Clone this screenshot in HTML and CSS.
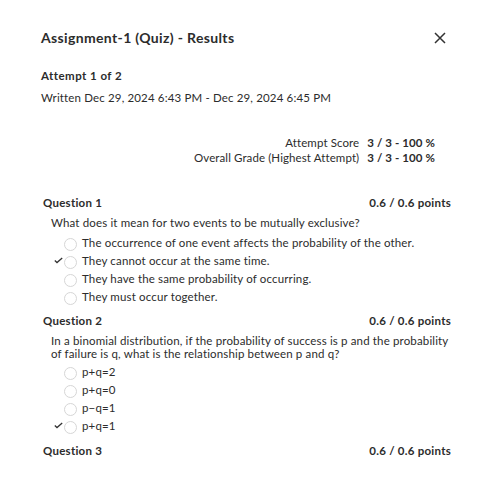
FILE: index.html
```html
<!DOCTYPE html>
<html>
<head>
<meta charset="utf-8">
<link rel="stylesheet" href="styles.css">
</head>
<body>
<div class="page">
  <div class="header">
    <h1 class="title">Assignment-1 (Quiz) - Results</h1>
    <svg class="close" width="12" height="12" viewBox="0 0 12 12"><path d="M1 1L11 11M11 1L1 11" stroke="#333" stroke-width="1.5" fill="none"/></svg>
  </div>
  <div class="attempt">Attempt 1 of 2</div>
  <div class="written">Written Dec 29, 2024 6:43 PM - Dec 29, 2024 6:45 PM</div>
  <div class="scores">
    <div class="score-label">Attempt Score</div><div class="score-val">3 / 3 - 100 %</div>
    <div class="score-label">Overall Grade (Highest Attempt)</div><div class="score-val">3 / 3 - 100 %</div>
  </div>

  <div class="question">
    <div class="q-head"><span>Question 1</span><span>0.6 / 0.6 points</span></div>
    <div class="q-text">What does it mean for two events to be mutually exclusive?</div>
    <div class="options">
      <div class="opt"><span class="mark"></span><span class="radio"></span><span>The occurrence of one event affects the probability of the other.</span></div>
      <div class="opt"><span class="mark"><svg width="9" height="7" viewBox="0 0 9 7"><path d="M0.8 3.6L3 5.6L8.2 1" stroke="#333" stroke-width="1.3" fill="none"/></svg></span><span class="radio"></span><span>They cannot occur at the same time.</span></div>
      <div class="opt"><span class="mark"></span><span class="radio"></span><span>They have the same probability of occurring.</span></div>
      <div class="opt"><span class="mark"></span><span class="radio"></span><span>They must occur together.</span></div>
    </div>
  </div>

  <div class="question">
    <div class="q-head"><span>Question 2</span><span>0.6 / 0.6 points</span></div>
    <div class="q-text">In a binomial distribution, if the probability of success is p and the probability of failure is q, what is the relationship between p and q?</div>
    <div class="options">
      <div class="opt"><span class="mark"></span><span class="radio"></span><span>p+q=2</span></div>
      <div class="opt"><span class="mark"></span><span class="radio"></span><span>p+q=0</span></div>
      <div class="opt"><span class="mark"></span><span class="radio"></span><span>p−q=1</span></div>
      <div class="opt"><span class="mark"><svg width="9" height="7" viewBox="0 0 9 7"><path d="M0.8 3.6L3 5.6L8.2 1" stroke="#333" stroke-width="1.3" fill="none"/></svg></span><span class="radio"></span><span>p+q=1</span></div>
    </div>
  </div>

  <div class="question">
    <div class="q-head"><span>Question 3</span><span>0.6 / 0.6 points</span></div>
  </div>
</div>
</body>
</html>
```
FILE: styles.css
```css
html, body {
  margin: 0;
  padding: 0;
  background: #fff;
}
body {
  font-family: Lato, "Open Sans", sans-serif;
  color: #2c2c2c;
}
.page {
  padding: 28px 43px 0 41px;
}
.header {
  display: flex;
  justify-content: space-between;
  align-items: center;
  height: 20px;
}
.title {
  margin: 0;
  font-size: 14px;
  font-weight: 700;
  letter-spacing: 0.35px;
  line-height: 20px;
}
.close {
  margin-right: 5px;
}
.attempt {
  margin-top: 20px;
  font-size: 11.5px;
  font-weight: 700;
  letter-spacing: 0.45px;
  line-height: 16px;
}
.written {
  margin-top: 6px;
  font-size: 11.5px;
  letter-spacing: 0.15px;
  line-height: 16px;
}
.scores {
  margin-top: 29px;
  display: grid;
  grid-template-columns: 1fr auto;
  column-gap: 8px;
  padding-right: 16px;
  font-size: 11.5px;
  letter-spacing: 0.1px;
  line-height: 15px;
}
.score-label {
  text-align: right;
}
.score-val {
  font-weight: 700;
}
.scores + .question {
  margin-top: 30px;
}
.q-head {
  display: flex;
  justify-content: space-between;
  font-size: 11.5px;
  font-weight: 700;
  letter-spacing: 0.25px;
  line-height: 16px;
  padding-left: 2px;
}
.q-text {
  margin-top: 5px;
  padding-left: 10px;
  font-size: 11.5px;
  letter-spacing: 0.15px;
  line-height: 13.5px;
}
.options {
  margin-top: 4px;
  padding-bottom: 7px;
}
.question + .question .options {
  margin-top: 2px;
  padding-bottom: 8px;
}
.opt {
  display: flex;
  align-items: center;
  height: 18px;
  font-size: 11.5px;
  letter-spacing: 0.15px;
}
.mark {
  width: 23px;
  display: flex;
  justify-content: flex-end;
  padding-right: 1px;
  box-sizing: border-box;
}
.radio {
  width: 13px;
  height: 13px;
  border: 1px solid #d6d6d6;
  border-radius: 50%;
  box-sizing: border-box;
  margin-right: 5px;
  margin-top: 3px;
}
```
